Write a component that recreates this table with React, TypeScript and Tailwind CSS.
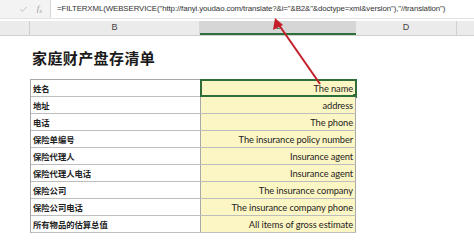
import { Check } from 'lucide-react'

const rows: [string, string][] = [
  ['姓名', 'The name'],
  ['地址', 'address'],
  ['电话', 'The phone'],
  ['保险单编号', 'The insurance policy number'],
  ['保险代理人', 'Insurance agent'],
  ['保险代理人电话', 'Insurance agent'],
  ['保险公司', 'The insurance company'],
  ['保险公司电话', 'The insurance company phone'],
  ['所有物品的估算总值', 'All items of gross estimate'],
]

const formula =
  '=FILTERXML(WEBSERVICE("http://fanyi.youdao.com/translate?&i="&B2&"&doctype=xml&version"),"//translation")'

export default function App() {
  return (
    <div className="relative w-[474px] h-[242px] overflow-hidden bg-white font-['Liberation_Sans',sans-serif] text-[#222]">
      {/* formula bar */}
      <div className="flex h-[19px] bg-[#f3f3f3] border-b border-[#e2e2e2]">
        <div className="w-[50px] flex items-center justify-end gap-[9px] pr-[8px] text-[#9a9a9a]">
          <Check size={9} strokeWidth={1.5} />
          <span className="font-['Liberation_Serif',serif] italic text-[9px]">f<sub className="text-[6px]">x</sub></span>
        </div>
        <div className="flex-1 bg-white border-l border-[#d6d6d6] flex items-center pl-[6px] whitespace-nowrap text-[7.9px] tracking-[-0.12px] text-[#333]">
          {formula}
        </div>
      </div>

      {/* column headers */}
      <div className="mt-[2px] flex h-[15px] bg-[#ebebeb] border-b border-[#d0d0d0] text-[9px] text-[#444]">
        <div className="w-[30px] border-r border-[#cfcfcf]" />
        <div className="w-[170px] flex items-center justify-center border-r border-[#d8d8d8]">B</div>
        <div className="w-[156px] flex items-center justify-center bg-[#d6d6d6] border-b-2 border-[#2f6e3b] text-[#2f6e3b]">C</div>
        <div className="w-[101px] flex items-center justify-center border-r border-[#cfcfcf]">D</div>
        <div className="flex-1" />
      </div>

      {/* title */}
      <div className="h-[43px] pl-[32px] flex items-center pt-[2px]">
        <span className="text-[15px] font-bold tracking-[0.4px] text-[#1a1a1a] font-['Noto_Sans_CJK_SC',sans-serif]">家庭财产盘存清单</span>
      </div>

      {/* table */}
      <div className="ml-[30px] w-[326px] border-t border-l border-[#a8a8a8]">
        {rows.map(([label, value], i) => (
          <div key={i} className="flex h-[17px] border-b border-[#bdbdbd]">
            <div className="w-[170px] flex items-center pl-[2px] border-r border-[#a8a8a8] text-[8.3px] font-bold text-[#222] font-['Noto_Sans_CJK_SC',sans-serif]">
              {label}
            </div>
            <div
              className={`relative flex-1 flex items-center justify-end pr-[2px] pt-[1px] bg-[#fcf5c4] border-r border-[#a8a8a8] text-[9.3px] tracking-[-0.1px] text-[#1e1e1e] font-['Lato',sans-serif] ${
                i === 0 ? 'outline-2 outline-[#2f6e3b] -outline-offset-1' : ''
              }`}
            >
              {value}
              {i === 0 && <span className="absolute -right-[2px] -bottom-[2px] w-[4px] h-[4px] bg-[#2f6e3b]" />}
            </div>
          </div>
        ))}
      </div>

      {/* red arrow */}
      <svg className="absolute left-0 top-0 pointer-events-none" width="474" height="242">
        <line x1="320" y1="84" x2="279" y2="25" stroke="#c21f2a" strokeWidth="2" />
        <polygon points="275,18 273,30 283,25" fill="#c21f2a" />
      </svg>
    </div>
  )
}
